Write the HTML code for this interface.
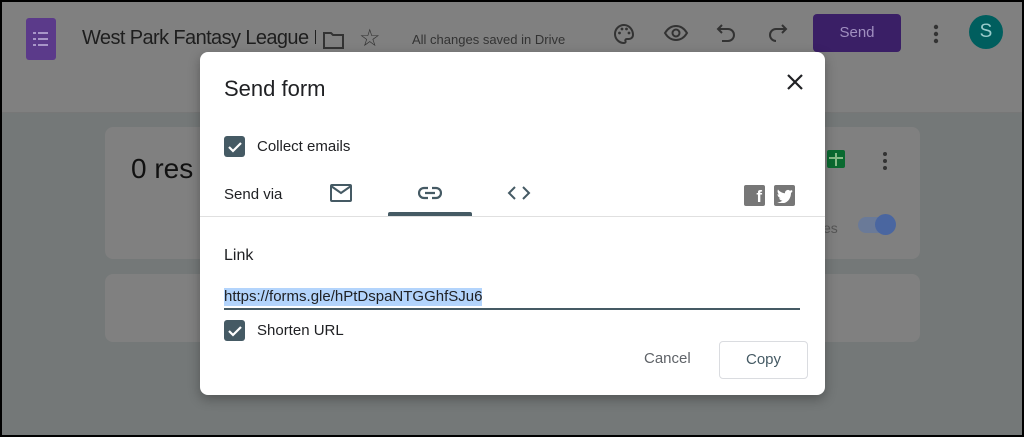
<!DOCTYPE html>
<html><head><style>
*{margin:0;padding:0;box-sizing:border-box}
body{width:1024px;height:437px;overflow:hidden;background:#000;font-family:"Liberation Sans",Arial,sans-serif;position:relative}
.frame{position:absolute;left:2px;top:2px;width:1020px;height:433px;background:#747878;overflow:hidden}
.top{position:absolute;left:0;top:0;width:1020px;height:111px;background:#808080;border-bottom:1px solid #777}
.abs{position:absolute}
.card{position:absolute;background:#808080;border-radius:8px}
.dlg{position:absolute;left:198px;top:50px;width:625px;height:343px;background:#fff;border-radius:8px;box-shadow:0 4px 12px rgba(0,0,0,.3)}
.cb{position:absolute;width:21px;height:21px;background:#455a64;border-radius:3px}
.t{position:absolute;color:#202124;white-space:nowrap}
</style></head><body><div class="frame">
<div class="top">
 <div class="abs" style="left:24px;top:16px;width:30px;height:42px;background:#5b3a8a;border-radius:3px"></div>
 <svg class="abs" style="left:31px;top:28px" width="16" height="18"><g fill="#a896c8"><rect x="0" y="2" width="3" height="2"/><rect x="5" y="2" width="10" height="2"/><rect x="0" y="8" width="3" height="2"/><rect x="5" y="8" width="10" height="2"/><rect x="0" y="14" width="3" height="2"/><rect x="5" y="14" width="10" height="2"/></g></svg>
 <div class="t" style="left:80px;top:25px;font-size:20px;color:#1e1e1e;letter-spacing:-0.6px;width:234px;overflow:hidden">West Park Fantasy League Draft</div>
 <svg class="abs" style="left:320px;top:28px" width="24" height="20"><path d="M2 3h7l2 2h10v13H2z" fill="none" stroke="#333" stroke-width="2"/></svg>
 <div class="t" style="left:357px;top:22px;font-size:24px;color:#333">☆</div>
 <div class="t" style="left:410px;top:30px;font-size:13px;color:#333">All changes saved in Drive</div>
 <svg class="abs" style="left:610px;top:20px" width="24" height="24"><path d="M12 3a9 9 0 0 0 0 18c1.5 0 2-1 1.5-2s0-2 1.5-2h2a4 4 0 0 0 4-4c0-5.5-4-10-9-10z" fill="none" stroke="#333" stroke-width="2"/><circle cx="7.5" cy="11" r="1.4" fill="#333"/><circle cx="10" cy="7" r="1.4" fill="#333"/><circle cx="14.5" cy="7" r="1.4" fill="#333"/><circle cx="17" cy="11" r="1.4" fill="#333"/></svg>
 <svg class="abs" style="left:661px;top:21px" width="26" height="20"><path d="M2 10c3-5 7-7 11-7s8 2 11 7c-3 5-7 7-11 7s-8-2-11-7z" fill="none" stroke="#333" stroke-width="2"/><circle cx="13" cy="10" r="3.5" fill="none" stroke="#333" stroke-width="2"/></svg>
 <svg class="abs" style="left:714px;top:20px" width="22" height="24"><path d="M6 3L2 7l4 4M2 7h10a6 6 0 0 1 0 12H6" fill="none" stroke="#333" stroke-width="2"/></svg>
 <svg class="abs" style="left:764px;top:20px" width="22" height="24"><path d="M16 3l4 4-4 4M20 7H10a6 6 0 0 0 0 12h0" fill="none" stroke="#333" stroke-width="2"/></svg>
 <div class="abs" style="left:811px;top:12px;width:88px;height:38px;background:#3a1f66;border-radius:4px;color:#a08fc0;font-size:15px;text-align:center;line-height:38px">Send</div>
 <svg class="abs" style="left:930px;top:20px" width="8" height="24"><circle cx="4" cy="5" r="2.2" fill="#333"/><circle cx="4" cy="12" r="2.2" fill="#333"/><circle cx="4" cy="19" r="2.2" fill="#333"/></svg>
 <div class="abs" style="left:967px;top:13px;width:34px;height:34px;border-radius:50%;background:#005e5e;color:#9cc;font-size:19px;text-align:center;line-height:34px">S</div>
</div>
<div class="card" style="left:103px;top:125px;width:815px;height:132px">
 <div class="t" style="left:26px;top:26px;font-size:28px;color:#111">0 res</div>
 <div class="abs" style="left:722px;top:23px;width:18px;height:18px;background:#0a6a30;border-radius:2px"></div>
 <div class="abs" style="left:730px;top:26px;width:2px;height:13px;background:#8b8"></div><div class="abs" style="left:724px;top:30px;width:14px;height:2px;background:#8b8"></div>
 <svg class="abs" style="left:776px;top:24px" width="8" height="20"><circle cx="4" cy="3" r="2" fill="#333"/><circle cx="4" cy="10" r="2" fill="#333"/><circle cx="4" cy="17" r="2" fill="#333"/></svg>
 <div class="t" style="left:718px;top:93px;font-size:14px;color:#555">es</div>
 <div class="abs" style="left:753px;top:90px;width:36px;height:16px;border-radius:8px;background:#6a7a98"></div>
 <div class="abs" style="left:770px;top:87px;width:21px;height:21px;border-radius:50%;background:#4a66a0"></div>
</div>
<div class="card" style="left:103px;top:272px;width:815px;height:68px"></div>
<div class="dlg">
 <div class="t" style="left:24px;top:24px;font-size:22px">Send form</div>
 <svg class="abs" style="left:587px;top:22px" width="16" height="16"><path d="M1 1l14 14M15 1L1 15" stroke="#202124" stroke-width="2.2"/></svg>
 <div class="cb" style="left:24px;top:84px"></div>
 <svg class="abs" style="left:24px;top:84px" width="21" height="21"><path d="M5 11l4 4 8-8" fill="none" stroke="#fff" stroke-width="2.2"/></svg>
 <div class="t" style="left:57px;top:86px;font-size:15px">Collect emails</div>
 <div class="t" style="left:24px;top:134px;font-size:15px">Send via</div>
 <svg class="abs" style="left:130px;top:132px" width="22" height="18"><rect x="1" y="1" width="20" height="16" rx="1" fill="none" stroke="#455a64" stroke-width="2"/><path d="M1 2l10 7 10-7" fill="none" stroke="#455a64" stroke-width="2"/></svg>
 <svg class="abs" style="left:218px;top:134px" width="24" height="14"><path d="M10 2H6a5 5 0 0 0 0 10h4M14 2h4a5 5 0 0 1 0 10h-4M7 7h10" fill="none" stroke="#455a64" stroke-width="2.2"/></svg>
 <div class="abs" style="left:188px;top:160px;width:84px;height:4px;background:#455a64;border-radius:2px 2px 0 0"></div>
 <svg class="abs" style="left:307px;top:133px" width="24" height="16"><path d="M8 2L2 8l6 6M16 2l6 6-6 6" fill="none" stroke="#455a64" stroke-width="2"/></svg>
 <div class="abs" style="left:544px;top:133px;width:21px;height:21px;background:#777;border-radius:2px;color:#fff;font-weight:bold;font-size:17px;text-align:right;padding-right:3px;line-height:24px">f</div>
 <div class="abs" style="left:574px;top:133px;width:21px;height:21px;background:#777;border-radius:2px"></div>
 <svg class="abs" style="left:576px;top:136px" width="17" height="15"><path d="M16 2c-1 .5-2 .7-2 .7a3 3 0 0 0-5 2.5C6 5 3.5 3.5 2 1.5c-1 2 0 4 1 5-.5 0-1-.2-1.5-.4 0 2 1.5 3.5 3 4-.6.2-1 .2-1.5.1.5 1.4 2 2.4 3.5 2.4A7 7 0 0 1 1 14c8 4 14-2 14-9 .6-.4 1-1 1.4-1.5z" fill="#fff"/></svg>
 <div class="abs" style="left:0;top:164px;width:625px;height:1px;background:#e0e0e0"></div>
 <div class="t" style="left:24px;top:195px;font-size:16px">Link</div>
 <div class="t" style="left:24px;top:236px;font-size:15px;background:#b3d4fc;line-height:18px">https://forms.gle/hPtDspaNTGGhfSJu6</div>
 <div class="abs" style="left:24px;top:256px;width:576px;height:2px;background:#455a64"></div>
 <div class="cb" style="left:24px;top:268px"></div>
 <svg class="abs" style="left:24px;top:268px" width="21" height="21"><path d="M5 11l4 4 8-8" fill="none" stroke="#fff" stroke-width="2.2"/></svg>
 <div class="t" style="left:57px;top:270px;font-size:15px">Shorten URL</div>
 <div class="t" style="left:444px;top:298px;font-size:15px;color:#5f6368">Cancel</div>
 <div class="abs" style="left:519px;top:289px;width:89px;height:38px;border:1px solid #dadce0;border-radius:4px;color:#455a64;font-size:15px;text-align:center;line-height:36px">Copy</div>
</div>
</div></body></html>
